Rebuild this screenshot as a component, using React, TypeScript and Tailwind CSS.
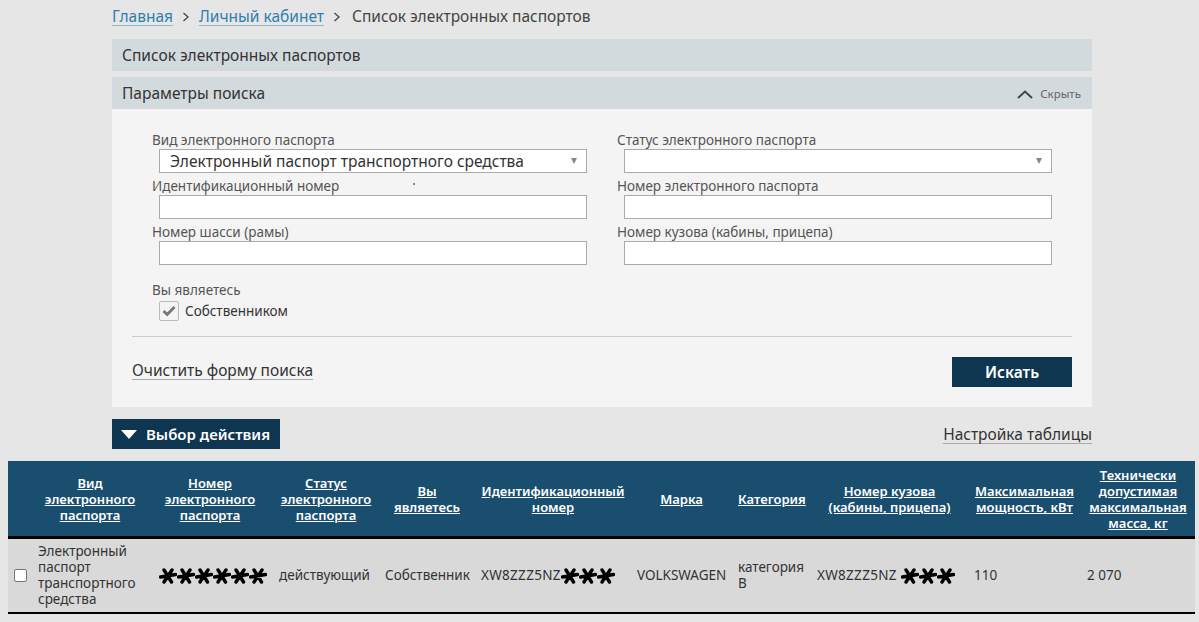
import React from 'react';

const font = "font-['Noto_Sans','Open_Sans',sans-serif]";

function Stars({ count }: { count: number }) {
  return (
    <span className="inline-flex align-middle">
      {Array.from({ length: count }).map((_, i) => (
        <svg key={i} width="18" height="16" viewBox="0 0 18 16">
          <path d="M1.5 9 L16.5 6.5 M5 2 L12.5 14 M13 2 L5 14" stroke="#000" strokeWidth="3.4" strokeLinecap="round" />
        </svg>
      ))}
    </span>
  );
}

function Chevron() {
  return (
    <svg width="8" height="10" viewBox="0 0 8 10">
      <path d="M1.5 1 L6 5 L1.5 9" fill="none" stroke="#444" strokeWidth="1.3" />
    </svg>
  );
}

function Field({ label, children }: { label: React.ReactNode; children: React.ReactNode }) {
  return (
    <div className="h-[46px]">
      <div className="h-[18px] text-[13.5px] leading-[18px] text-[#555]">{label}</div>
      <div className="pl-[7px]">{children}</div>
    </div>
  );
}

function TextInput() {
  return <input type="text" className="block w-[428px] h-6 bg-white border border-[#aaa] outline-none" />;
}

function SelectBox({ value }: { value?: string }) {
  return (
    <div className="w-[428px] h-6 bg-white border border-[#aaa] flex items-center justify-between pl-[10px] pr-[9px]">
      <span className="text-[15.5px] text-[#333] pt-[1px]">{value}</span>
      <span className="w-0 h-0 border-x-[3px] border-x-transparent border-t-[6px] border-t-[#888]" />
    </div>
  );
}

const th = 'font-semibold text-[13px] leading-4 text-white underline text-center align-middle pt-[2px]';
const td = 'text-[13.5px] leading-4 text-[#333] align-middle text-left';

export default function App() {
  return (
    <div className={`${font} w-[1199px] h-[622px] overflow-hidden bg-[#e6e6e6]`}>
      <div className="w-[980px] ml-[112px]">
        {/* Breadcrumbs */}
        <div className="h-[39px] flex items-center pb-[6px] text-[15.5px] text-[#444]">
          <a className="text-[#2f7fad] border-b border-[#8cb8d2] leading-[18px]">Главная</a>
          <span className="mx-[9px] flex"><Chevron /></span>
          <a className="text-[#2f7fad] border-b border-[#8cb8d2] leading-[18px]">Личный кабинет</a>
          <span className="ml-[9px] mr-[11px] flex"><Chevron /></span>
          <span>Список электронных паспортов</span>
        </div>

        <div className="h-8 bg-[#d2dade] flex items-center px-[10px] pt-[2px] text-[15.5px] text-[#333]">Список электронных паспортов</div>

        <div className="mt-[6px] h-8 bg-[#d2dade] flex items-center justify-between pl-[10px] pr-[11px] pt-[2px] text-[15.5px] text-[#333]">
          <span>Параметры поиска</span>
          <span className="flex items-center gap-[7px] text-[11.5px] text-[#666]">
            <svg width="16" height="9" viewBox="0 0 16 9">
              <path d="M1 8 L8 1.5 L15 8" fill="none" stroke="#444" strokeWidth="2" />
            </svg>
            Скрыть
          </span>
        </div>

        {/* Search form */}
        <div className="h-[298px] bg-[#f4f4f4] px-5">
          <div className="px-5 pt-[22px] grid grid-cols-[465px_1fr]">
            <div>
              <Field label="Вид электронного паспорта"><SelectBox value="Электронный паспорт транспортного средства" /></Field>
              <Field label={<>Идентификационный номер<span className="inline-block w-[2px] h-[2px] ml-[74px] mb-[6px] bg-[#7a86c8]" /></>}><TextInput /></Field>
              <Field label="Номер шасси (рамы)"><TextInput /></Field>
            </div>
            <div>
              <Field label="Статус электронного паспорта"><SelectBox /></Field>
              <Field label="Номер электронного паспорта"><TextInput /></Field>
              <Field label="Номер кузова (кабины, прицепа)"><TextInput /></Field>
            </div>
          </div>
          <div className="px-5 mt-[12px]">
            <div className="text-[13.5px] leading-[18px] text-[#555]">Вы являетесь</div>
            <div className="pl-[7px] mt-[2px] flex items-center gap-[6px] text-[13.5px] text-[#333]">
              <span className="w-5 h-5 bg-[#f4f4f4] border border-[#bbb] rounded-[2px] flex items-center justify-center">
                <svg width="14" height="12" viewBox="0 0 14 12">
                  <path d="M1.5 6 L5.2 9.5 L12.5 2" fill="none" stroke="#777" strokeWidth="2.8" />
                </svg>
              </span>
              Собственником
            </div>
          </div>
          <div className="border-t border-[#ccc] mt-[15px]" />
          <div className="flex items-center justify-between mt-5">
            <a className="text-[15.5px] leading-[18px] mb-[3px] text-[#333] border-b border-[#aaa]">Очистить форму поиска</a>
            <button className="w-[120px] h-[30px] bg-[#0f3651] text-white text-[15.5px] font-semibold">Искать</button>
          </div>
        </div>

        {/* Actions */}
        <div className="mt-3 h-[30px] flex items-center justify-between">
          <button className="h-[30px] w-[168px] bg-[#0f3651] text-white text-[15px] font-semibold flex items-center pl-[9px] gap-[9px]">
            <span className="w-0 h-0 border-x-[8px] border-x-transparent border-t-[9px] border-t-white" />
            Выбор действия
          </button>
          <a className="text-[15.5px] leading-[18px] text-[#333] border-b border-[#aaa]">Настройка таблицы</a>
        </div>
      </div>

      {/* Table */}
      <table className="mt-3 ml-2 w-[1187px] table-fixed border-collapse">
        <colgroup>
          <col className="w-6" />
          <col className="w-[121px]" />
          <col className="w-[120px]" />
          <col className="w-[106px]" />
          <col className="w-[96px]" />
          <col className="w-[156px]" />
          <col className="w-[101px]" />
          <col className="w-[79px]" />
          <col className="w-[157px]" />
          <col className="w-[113px]" />
          <col className="w-[114px]" />
        </colgroup>
        <thead>
          <tr className="h-[76px] bg-[#1a4e6e] border-b-[3px] border-black">
            <th />
            <th className={`${th} pl-[6px] pr-[11px]`}>Вид электронного паспорта</th>
            <th className={`${th} pl-[6px] pr-[12px]`}>Номер электронного паспорта</th>
            <th className={`${th} px-[6px]`}>Статус электронного паспорта</th>
            <th className={`${th} px-[6px]`}>Вы<br />являетесь</th>
            <th className={`${th} px-[6px]`}>Идентификационный номер</th>
            <th className={`${th} px-[6px]`}>Марка</th>
            <th className={`${th} px-[6px]`}>Категория</th>
            <th className={`${th} px-[6px]`}>Номер кузова (кабины, прицепа)</th>
            <th className={`${th} px-[6px]`}>Максимальная мощность, кВт</th>
            <th className={`${th} px-[6px]`}>Технически допустимая максимальная масса, кг</th>
          </tr>
        </thead>
        <tbody>
          <tr className="h-[76px] bg-[#d9d9d9] border-b-[2px] border-black">
            <td className="pl-[6px] align-middle">
              <span className="block w-[13px] h-[13px] bg-white border border-[#767676] rounded-[2px]" />
            </td>
            <td className={`${td} pl-[6px] pr-[11px]`}>Электронный паспорт транспортного средства</td>
            <td className={`${td} px-[6px]`}><Stars count={6} /></td>
            <td className={`${td} px-[6px]`}>действующий</td>
            <td className={`${td} px-[6px]`}>Собственник</td>
            <td className={`${td} px-[6px] whitespace-nowrap tracking-[0.3px]`}>XW8ZZZ5NZ<Stars count={3} /></td>
            <td className={`${td} px-[6px]`}>VOLKSWAGEN</td>
            <td className={`${td} px-[6px]`}>категория B</td>
            <td className={`${td} px-[6px] whitespace-nowrap tracking-[0.3px]`}>XW8ZZZ5NZ <Stars count={3} /></td>
            <td className={`${td} px-[6px]`}>110</td>
            <td className={`${td} px-[6px]`}>2 070</td>
          </tr>
        </tbody>
      </table>
    </div>
  );
}
